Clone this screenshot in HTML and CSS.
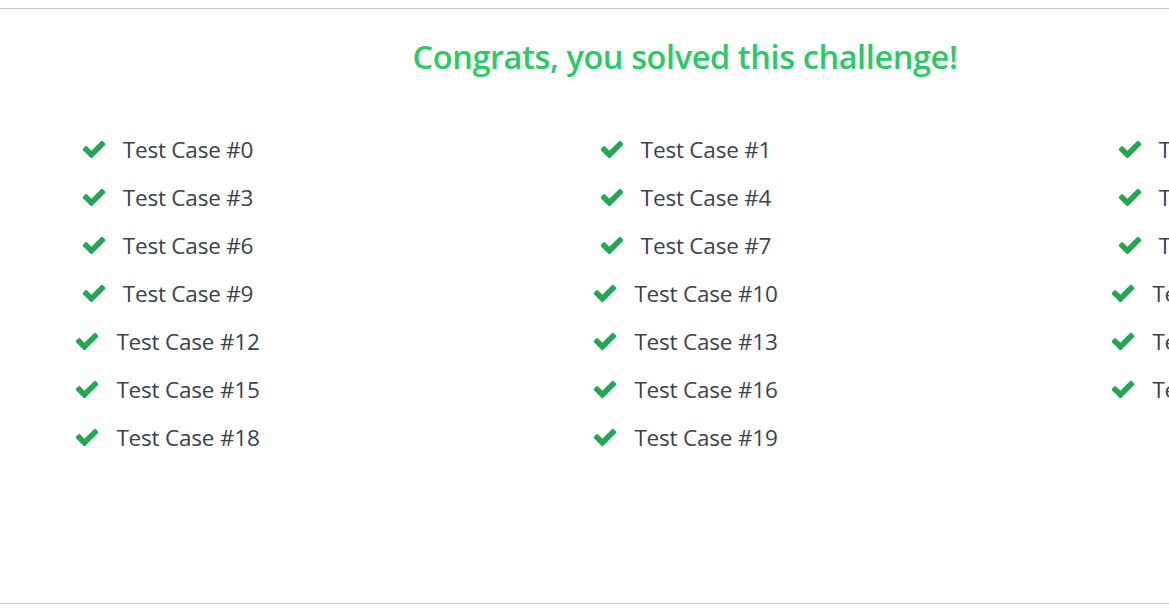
FILE: index.html
```html
<!DOCTYPE html>
<html lang="en">
<head>
    <meta charset="UTF-8">
    <meta name="viewport" content="width=device-width, initial-scale=1.0">
    <title>Congrats</title>
    <link rel="stylesheet" href="styles.css">
</head>
<body>
    <section class="result-panel">
        <div class="result-inner">
            <h2 class="congrats">Congrats, you solved this challenge!</h2>
            <div class="testcases">
                <div class="tc"><svg class="tick" viewBox="0 0 1792 1792"><path d="M1671 566q0 40-28 68l-724 724-136 136q-28 28-68 28t-68-28l-136-136-362-362q-28-28-28-68t28-68l136-136q28-28 68-28t68 28l294 295 656-657q28-28 68-28t68 28l136 136q28 28 28 68z"/></svg><span>Test Case #0</span></div>
                <div class="tc"><svg class="tick" viewBox="0 0 1792 1792"><path d="M1671 566q0 40-28 68l-724 724-136 136q-28 28-68 28t-68-28l-136-136-362-362q-28-28-28-68t28-68l136-136q28-28 68-28t68 28l294 295 656-657q28-28 68-28t68 28l136 136q28 28 28 68z"/></svg><span>Test Case #1</span></div>
                <div class="tc"><svg class="tick" viewBox="0 0 1792 1792"><path d="M1671 566q0 40-28 68l-724 724-136 136q-28 28-68 28t-68-28l-136-136-362-362q-28-28-28-68t28-68l136-136q28-28 68-28t68 28l294 295 656-657q28-28 68-28t68 28l136 136q28 28 28 68z"/></svg><span>Test Case #2</span></div>
                <div class="tc"><svg class="tick" viewBox="0 0 1792 1792"><path d="M1671 566q0 40-28 68l-724 724-136 136q-28 28-68 28t-68-28l-136-136-362-362q-28-28-28-68t28-68l136-136q28-28 68-28t68 28l294 295 656-657q28-28 68-28t68 28l136 136q28 28 28 68z"/></svg><span>Test Case #3</span></div>
                <div class="tc"><svg class="tick" viewBox="0 0 1792 1792"><path d="M1671 566q0 40-28 68l-724 724-136 136q-28 28-68 28t-68-28l-136-136-362-362q-28-28-28-68t28-68l136-136q28-28 68-28t68 28l294 295 656-657q28-28 68-28t68 28l136 136q28 28 28 68z"/></svg><span>Test Case #4</span></div>
                <div class="tc"><svg class="tick" viewBox="0 0 1792 1792"><path d="M1671 566q0 40-28 68l-724 724-136 136q-28 28-68 28t-68-28l-136-136-362-362q-28-28-28-68t28-68l136-136q28-28 68-28t68 28l294 295 656-657q28-28 68-28t68 28l136 136q28 28 28 68z"/></svg><span>Test Case #5</span></div>
                <div class="tc"><svg class="tick" viewBox="0 0 1792 1792"><path d="M1671 566q0 40-28 68l-724 724-136 136q-28 28-68 28t-68-28l-136-136-362-362q-28-28-28-68t28-68l136-136q28-28 68-28t68 28l294 295 656-657q28-28 68-28t68 28l136 136q28 28 28 68z"/></svg><span>Test Case #6</span></div>
                <div class="tc"><svg class="tick" viewBox="0 0 1792 1792"><path d="M1671 566q0 40-28 68l-724 724-136 136q-28 28-68 28t-68-28l-136-136-362-362q-28-28-28-68t28-68l136-136q28-28 68-28t68 28l294 295 656-657q28-28 68-28t68 28l136 136q28 28 28 68z"/></svg><span>Test Case #7</span></div>
                <div class="tc"><svg class="tick" viewBox="0 0 1792 1792"><path d="M1671 566q0 40-28 68l-724 724-136 136q-28 28-68 28t-68-28l-136-136-362-362q-28-28-28-68t28-68l136-136q28-28 68-28t68 28l294 295 656-657q28-28 68-28t68 28l136 136q28 28 28 68z"/></svg><span>Test Case #8</span></div>
                <div class="tc"><svg class="tick" viewBox="0 0 1792 1792"><path d="M1671 566q0 40-28 68l-724 724-136 136q-28 28-68 28t-68-28l-136-136-362-362q-28-28-28-68t28-68l136-136q28-28 68-28t68 28l294 295 656-657q28-28 68-28t68 28l136 136q28 28 28 68z"/></svg><span>Test Case #9</span></div>
                <div class="tc"><svg class="tick" viewBox="0 0 1792 1792"><path d="M1671 566q0 40-28 68l-724 724-136 136q-28 28-68 28t-68-28l-136-136-362-362q-28-28-28-68t28-68l136-136q28-28 68-28t68 28l294 295 656-657q28-28 68-28t68 28l136 136q28 28 28 68z"/></svg><span>Test Case #10</span></div>
                <div class="tc"><svg class="tick" viewBox="0 0 1792 1792"><path d="M1671 566q0 40-28 68l-724 724-136 136q-28 28-68 28t-68-28l-136-136-362-362q-28-28-28-68t28-68l136-136q28-28 68-28t68 28l294 295 656-657q28-28 68-28t68 28l136 136q28 28 28 68z"/></svg><span>Test Case #11</span></div>
                <div class="tc"><svg class="tick" viewBox="0 0 1792 1792"><path d="M1671 566q0 40-28 68l-724 724-136 136q-28 28-68 28t-68-28l-136-136-362-362q-28-28-28-68t28-68l136-136q28-28 68-28t68 28l294 295 656-657q28-28 68-28t68 28l136 136q28 28 28 68z"/></svg><span>Test Case #12</span></div>
                <div class="tc"><svg class="tick" viewBox="0 0 1792 1792"><path d="M1671 566q0 40-28 68l-724 724-136 136q-28 28-68 28t-68-28l-136-136-362-362q-28-28-28-68t28-68l136-136q28-28 68-28t68 28l294 295 656-657q28-28 68-28t68 28l136 136q28 28 28 68z"/></svg><span>Test Case #13</span></div>
                <div class="tc"><svg class="tick" viewBox="0 0 1792 1792"><path d="M1671 566q0 40-28 68l-724 724-136 136q-28 28-68 28t-68-28l-136-136-362-362q-28-28-28-68t28-68l136-136q28-28 68-28t68 28l294 295 656-657q28-28 68-28t68 28l136 136q28 28 28 68z"/></svg><span>Test Case #14</span></div>
                <div class="tc"><svg class="tick" viewBox="0 0 1792 1792"><path d="M1671 566q0 40-28 68l-724 724-136 136q-28 28-68 28t-68-28l-136-136-362-362q-28-28-28-68t28-68l136-136q28-28 68-28t68 28l294 295 656-657q28-28 68-28t68 28l136 136q28 28 28 68z"/></svg><span>Test Case #15</span></div>
                <div class="tc"><svg class="tick" viewBox="0 0 1792 1792"><path d="M1671 566q0 40-28 68l-724 724-136 136q-28 28-68 28t-68-28l-136-136-362-362q-28-28-28-68t28-68l136-136q28-28 68-28t68 28l294 295 656-657q28-28 68-28t68 28l136 136q28 28 28 68z"/></svg><span>Test Case #16</span></div>
                <div class="tc"><svg class="tick" viewBox="0 0 1792 1792"><path d="M1671 566q0 40-28 68l-724 724-136 136q-28 28-68 28t-68-28l-136-136-362-362q-28-28-28-68t28-68l136-136q28-28 68-28t68 28l294 295 656-657q28-28 68-28t68 28l136 136q28 28 28 68z"/></svg><span>Test Case #17</span></div>
                <div class="tc"><svg class="tick" viewBox="0 0 1792 1792"><path d="M1671 566q0 40-28 68l-724 724-136 136q-28 28-68 28t-68-28l-136-136-362-362q-28-28-28-68t28-68l136-136q28-28 68-28t68 28l294 295 656-657q28-28 68-28t68 28l136 136q28 28 28 68z"/></svg><span>Test Case #18</span></div>
                <div class="tc"><svg class="tick" viewBox="0 0 1792 1792"><path d="M1671 566q0 40-28 68l-724 724-136 136q-28 28-68 28t-68-28l-136-136-362-362q-28-28-28-68t28-68l136-136q28-28 68-28t68 28l294 295 656-657q28-28 68-28t68 28l136 136q28 28 28 68z"/></svg><span>Test Case #19</span></div>
            </div>
        </div>
    </section>
</body>
</html>
```

FILE: styles.css
```css
html, body { margin: 0; padding: 0; background: #ffffff; overflow: hidden; }
body { font-family: "Open Sans", "Noto Sans", sans-serif; color: #39424e; }
.result-panel { margin-top: 8px; height: 596px; border-top: 1px solid #c8c8cc; border-bottom: 1px solid #c8c8cc; box-sizing: border-box; }
.result-inner { width: 1554px; margin-left: -92px; }
.congrats { margin: 26px 0 0 0; text-align: center; color: #2ec866; font-size: 32.5px; font-weight: 600; line-height: 44px; letter-spacing: -0.4px; }
.testcases { display: grid; grid-template-columns: repeat(3, 518px); margin-top: 46px; }
.tc { display: flex; justify-content: center; align-items: center; height: 48px; gap: 16px; font-size: 22.5px; }
.tc span { letter-spacing: -0.2px; }
.tick { width: 26px; height: 26px; fill: #24a752; flex: 0 0 26px; }
```
